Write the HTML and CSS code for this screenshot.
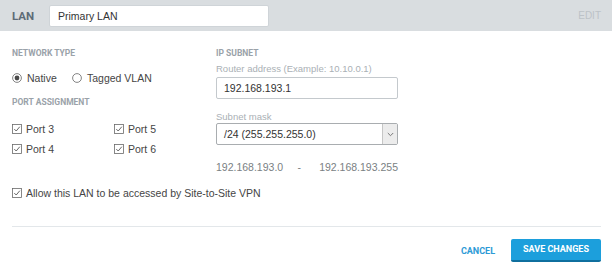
FILE: index.html
```html
<!DOCTYPE html>
<html lang="en">
<head>
    <meta charset="UTF-8">
    <meta name="viewport" content="width=device-width, initial-scale=1.0">
    <title>LAN</title>
    <link rel="stylesheet" href="styles.css">
</head>
<body>
    <div class="header">
        <span class="header-title">LAN</span>
        <div class="name-input">Primary LAN</div>
        <span class="edit-link">EDIT</span>
    </div>

    <div class="content">
        <div class="columns">
            <div class="col-left">
                <div class="section-label">NETWORK TYPE</div>
                <div class="radio-row">
                    <label class="choice">
                        <svg class="radio" width="10" height="10" viewBox="0 0 10 10"><circle cx="5" cy="5" r="4.4" fill="#fff" stroke="#666" stroke-width="0.8"/><circle cx="5" cy="5" r="2.4" fill="#4a4a4a"/></svg>
                        Native
                    </label>
                    <label class="choice">
                        <svg class="radio" width="10" height="10" viewBox="0 0 10 10"><circle cx="5" cy="5" r="4.4" fill="#fff" stroke="#666" stroke-width="0.8"/></svg>
                        Tagged VLAN
                    </label>
                </div>

                <div class="section-label port-label">PORT ASSIGNMENT</div>
                <div class="port-grid">
                    <label class="choice"><svg class="check" width="10" height="10" viewBox="0 0 10 10"><rect x="0.5" y="0.5" width="9" height="9" fill="#fff" stroke="#6a6a6a" stroke-width="0.8"/><path d="M2.3 5.1 L4.2 7 L7.8 2.7" fill="none" stroke="#555" stroke-width="0.9"/></svg>Port 3</label>
                    <label class="choice"><svg class="check" width="10" height="10" viewBox="0 0 10 10"><rect x="0.5" y="0.5" width="9" height="9" fill="#fff" stroke="#6a6a6a" stroke-width="0.8"/><path d="M2.3 5.1 L4.2 7 L7.8 2.7" fill="none" stroke="#555" stroke-width="0.9"/></svg>Port 5</label>
                    <label class="choice"><svg class="check" width="10" height="10" viewBox="0 0 10 10"><rect x="0.5" y="0.5" width="9" height="9" fill="#fff" stroke="#6a6a6a" stroke-width="0.8"/><path d="M2.3 5.1 L4.2 7 L7.8 2.7" fill="none" stroke="#555" stroke-width="0.9"/></svg>Port 4</label>
                    <label class="choice"><svg class="check" width="10" height="10" viewBox="0 0 10 10"><rect x="0.5" y="0.5" width="9" height="9" fill="#fff" stroke="#6a6a6a" stroke-width="0.8"/><path d="M2.3 5.1 L4.2 7 L7.8 2.7" fill="none" stroke="#555" stroke-width="0.9"/></svg>Port 6</label>
                </div>
            </div>

            <div class="col-right">
                <div class="section-label">IP SUBNET</div>
                <div class="field-label">Router address (Example: 10.10.0.1)</div>
                <div class="text-input">192.168.193.1</div>
                <div class="field-label mask-label">Subnet mask</div>
                <div class="select">
                    <span class="select-value">/24 (255.255.255.0)</span>
                    <span class="select-btn">
                        <svg width="7" height="5" viewBox="0 0 7 5"><path d="M0.8 1 L3.5 3.7 L6.2 1" fill="none" stroke="#777" stroke-width="1"/></svg>
                    </span>
                </div>
                <div class="range">
                    <span>192.168.193.0</span>
                    <span class="dash">-</span>
                    <span>192.168.193.255</span>
                </div>
            </div>
        </div>

        <label class="choice vpn-row"><svg class="check" width="10" height="10" viewBox="0 0 10 10"><rect x="0.5" y="0.5" width="9" height="9" fill="#fff" stroke="#6a6a6a" stroke-width="0.8"/><path d="M2.3 5.1 L4.2 7 L7.8 2.7" fill="none" stroke="#555" stroke-width="0.9"/></svg>Allow this LAN to be accessed by Site-to-Site VPN</label>

        <div class="divider"></div>

        <div class="footer">
            <span class="cancel-btn">CANCEL</span>
            <span class="save-btn">SAVE CHANGES</span>
        </div>
    </div>
</body>
</html>
```

FILE: styles.css
```css
body {
    margin: 0;
    padding: 0;
    font-family: 'Liberation Sans', Arial, sans-serif;
    font-size: 10.5px;
    color: #454545;
    background: #fff;
    width: 612px;
    height: 272px;
    overflow: hidden;
}

.header {
    display: flex;
    align-items: center;
    height: 31px;
    padding: 0 11px 0 12px;
    background-color: #d9dde0;
}

.header-title {
    font-family: 'Roboto', sans-serif;
    font-weight: bold;
    font-size: 11.5px;
    color: #5d6b77;
    width: 37px;
}

.name-input {
    width: 210px;
    height: 20px;
    line-height: 20px;
    padding-left: 8px;
    background: #fff;
    border: 1px solid #cfd4d8;
    border-radius: 2px;
    color: #333;
}

.edit-link {
    margin-left: auto;
    font-size: 10px;
    color: #bcc2c7;
}

.content {
    padding: 0 11px 0 12px;
}

.columns {
    display: flex;
}

.col-left {
    width: 204px;
}

.col-right {
    width: 182px;
}

.section-label {
    font-family: 'Roboto', sans-serif;
    font-weight: bold;
    font-size: 8.5px;
    line-height: 12px;
    color: #9aa2a9;
    margin-top: 16px;
}

.port-label {
    margin-top: 11px;
}

.choice {
    display: flex;
    align-items: center;
    height: 14px;
    line-height: 14px;
}

.radio,
.check {
    flex-shrink: 0;
    margin-right: 4px;
}

.radio-row {
    display: flex;
    margin-top: 12px;
}

.radio-row .choice:first-child {
    width: 60px;
}

.radio-row .radio {
    margin-right: 5px;
}

.port-grid {
    display: grid;
    grid-template-columns: 102px 80px;
    row-gap: 6px;
    margin-top: 14px;
}

.field-label {
    font-size: 9.5px;
    line-height: 12px;
    color: #aab0b5;
    margin-top: 4px;
}

.mask-label {
    margin-top: 12px;
}

.text-input {
    margin-top: 2px;
    height: 20px;
    line-height: 20px;
    padding-left: 7px;
    border: 1px solid #c4c9cd;
    border-radius: 2px;
    color: #333;
}

.select {
    display: flex;
    height: 20px;
    border: 1px solid #a9adb0;
    border-radius: 2px;
}

.select-value {
    flex: 1;
    line-height: 20px;
    padding-left: 7px;
    color: #333;
}

.select-btn {
    display: flex;
    align-items: center;
    justify-content: center;
    width: 14px;
    background: #ececec;
    border-left: 1px solid #c6c6c6;
}

.range {
    display: flex;
    justify-content: space-between;
    margin-top: 15px;
    line-height: 14px;
    color: #7a7f83;
}

.dash {
    padding-right: 4px;
}

.vpn-row {
    margin-top: 12px;
}

.divider {
    height: 1px;
    background: #e3e7ea;
    margin-top: 26px;
}

.footer {
    display: flex;
    justify-content: flex-end;
    align-items: center;
    margin-top: 12px;
}

.cancel-btn {
    font-family: 'Roboto', sans-serif;
    font-weight: bold;
    font-size: 9px;
    color: #2d9ad6;
    margin-right: 16px;
}

.save-btn {
    font-family: 'Roboto', sans-serif;
    font-weight: bold;
    font-size: 9px;
    color: #fff;
    background: #1c9fdc;
    border-bottom: 2px solid #0f6f9e;
    border-radius: 2px;
    width: 90px;
    height: 21px;
    line-height: 21px;
    text-align: center;
}
```
